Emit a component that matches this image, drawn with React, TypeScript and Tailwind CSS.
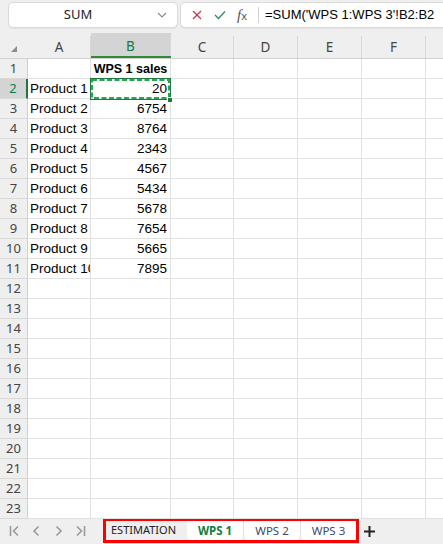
import React from "react";

const cols = [
  { key: "A", w: "w-[63px]" },
  { key: "B", w: "w-[80px]" },
  { key: "C", w: "w-[63px]" },
  { key: "D", w: "w-[64px]" },
  { key: "E", w: "w-[64px]" },
  { key: "F", w: "w-[64px]" },
];

const data: Record<number, [string, string, boolean?]> = {
  1: ["", "WPS 1 sales", true],
  2: ["Product 1", "20"],
  3: ["Product 2", "6754"],
  4: ["Product 3", "8764"],
  5: ["Product 4", "2343"],
  6: ["Product 5", "4567"],
  7: ["Product 6", "5434"],
  8: ["Product 7", "5678"],
  9: ["Product 8", "7654"],
  10: ["Product 9", "5665"],
  11: ["Product 10", "7895"],
};

const ui = { fontFamily: '"Noto Sans", "Open Sans", sans-serif' };
const cellFont = { fontFamily: '"Liberation Sans", Arial, sans-serif' };

function Selection() {
  return (
    <svg className="absolute left-[-1px] top-[-1px] pointer-events-none" width="83" height="24" viewBox="0 0 83 24">
      <rect x="0.5" y="0.5" width="80" height="21" fill="none" stroke="#1f7a3f" strokeWidth="1" />
      <rect x="2" y="2" width="77" height="18" fill="none" stroke="#26a84f" strokeWidth="2" strokeDasharray="5 2.5" />
      <rect x="77.5" y="19.5" width="5" height="5" fill="#1f7a3f" stroke="#ffffff" strokeWidth="1" />
    </svg>
  );
}

function Row({ n }: { n: number }) {
  const d = data[n];
  const selected = n === 2;
  return (
    <div className="flex h-[20px]">
      <div
        className={`w-[28px] shrink-0 flex items-center justify-center pt-[1px] border-b border-[#d9d9d9] text-[13px] ${
          selected ? "bg-[#d4d4d4] text-[#107c41] border-r-2 border-r-[#217346]" : "bg-[#efefef] text-[#444] border-r border-r-[#d0d0d0]"
        }`}
        style={ui}
      >
        {n}
      </div>
      {cols.map((c) => {
        let content: React.ReactNode = null;
        let align = "justify-start pl-[2px]";
        let bold = false;
        if (d && c.key === "A") content = d[0];
        if (d && c.key === "B") {
          content = d[1];
          if (d[2]) {
            bold = true;
            align = "justify-center";
          } else align = "justify-end pr-[3px]";
        }
        return (
          <div
            key={c.key}
            className={`${c.w} shrink-0 relative flex items-center pt-[1px] overflow-hidden whitespace-nowrap bg-white border-r border-b border-[#e1e1e1] text-black ${align} ${
              bold ? "font-bold text-[12.5px]" : "text-[13.5px]"
            }`}
            style={cellFont}
          >
            {content}
          </div>
        );
      })}
      <div className="flex-1 bg-white border-b border-[#e1e1e1]" />
    </div>
  );
}

function NavIcon({ kind }: { kind: "first" | "prev" | "next" | "last" }) {
  return (
    <svg width="11" height="12" viewBox="0 0 11 12" fill="none" stroke="#9a9a9a" strokeWidth="1.6">
      {kind === "first" && (
        <>
          <line x1="1.5" y1="1" x2="1.5" y2="11" />
          <polyline points="9,1.5 4.5,6 9,10.5" />
        </>
      )}
      {kind === "prev" && <polyline points="7.5,1.5 3,6 7.5,10.5" />}
      {kind === "next" && <polyline points="3.5,1.5 8,6 3.5,10.5" />}
      {kind === "last" && (
        <>
          <polyline points="2,1.5 6.5,6 2,10.5" />
          <line x1="9.5" y1="1" x2="9.5" y2="11" />
        </>
      )}
    </svg>
  );
}

export default function App() {
  const rows = Array.from({ length: 23 }, (_, i) => i + 1);
  return (
    <div className="w-[443px] h-[544px] bg-[#efefef] flex flex-col overflow-hidden">
      {/* top bar */}
      <div className="h-[33px] shrink-0 flex pt-[2px] pl-[8px] gap-[2px]">
        <div className="w-[170px] shrink-0 h-[26px] bg-white rounded-[5px] border border-[#dadada] shadow-[0_1px_1px_rgba(0,0,0,0.06)] flex items-center">
          <div className="flex-1 text-center text-[13px] text-[#222]" style={ui}>
            SUM
          </div>
          <div className="w-[30px] flex items-center justify-center">
            <svg width="10" height="6" viewBox="0 0 10 6" fill="none" stroke="#8a8a8a" strokeWidth="1.1">
              <polyline points="1,1 5,5 9,1" />
            </svg>
          </div>
        </div>
        <div className="w-[290px] shrink-0 h-[26px] bg-white rounded-[5px] border border-[#dadada] shadow-[0_1px_1px_rgba(0,0,0,0.06)] flex items-center">
          <div className="w-[11px]" />
          <svg width="10" height="10" viewBox="0 0 10 10" stroke="#c8374b" strokeWidth="1.3">
            <line x1="1" y1="1" x2="9" y2="9" />
            <line x1="9" y1="1" x2="1" y2="9" />
          </svg>
          <div className="w-[12px]" />
          <svg width="12" height="10" viewBox="0 0 12 10" fill="none" stroke="#2e8b57" strokeWidth="1.3">
            <polyline points="1,5 4.5,8.5 11,1.5" />
          </svg>
          <div className="w-[11px]" />
          <span className="text-[15px] italic text-[#555] leading-none" style={{ fontFamily: '"Liberation Serif", serif' }}>
            f<span className="text-[11px] not-italic" style={ui}>x</span>
          </span>
          <div className="w-[11px]" />
          <div className="w-px h-[16px] bg-[#d0d0d0]" />
          <div className="w-[6px]" />
          <span className="text-[13px] text-black whitespace-nowrap" style={cellFont}>
            =SUM('WPS 1:WPS 3'!B2:B2
          </span>
        </div>
      </div>

      {/* column headers */}
      <div className="h-[26px] shrink-0 flex border-b border-[#d0d0d0]">
        <div className="w-[28px] shrink-0 flex items-end justify-end pb-[6px] pr-[11px]">
          <svg width="6" height="6" viewBox="0 0 6 6">
            <polygon points="6,0 6,6 0,6" fill="#8c8c8c" />
          </svg>
        </div>
        {cols.map((c) => {
          const sel = c.key === "B";
          return (
            <div key={c.key} className={`${c.w} shrink-0 flex flex-col ${sel ? "bg-[#d4d4d4]" : ""}`}>
              <div
                className={`flex-1 flex items-center justify-center text-[13.5px] mt-[3px] ${
                  sel ? "text-[#107c41]" : "text-[#444]"
                } border-r border-[#d8d8d8]`}
                style={ui}
              >
                {c.key}
              </div>
              {sel && <div className="h-[2px] bg-[#2f8a3a]" />}
            </div>
          );
        })}
        <div className="flex-1" />
      </div>

      {/* grid */}
      <div className="relative shrink-0">
        {rows.map((n) => (
          <Row key={n} n={n} />
        ))}
        <div className="absolute left-[91px] top-[20px]">
          <Selection />
        </div>
      </div>

      {/* tab bar */}
      <div className="h-[25px] shrink-0 flex items-start">
        <div className="w-[103px] h-[24px] shrink-0 flex items-center pl-[9px] gap-[11px]">
          <NavIcon kind="first" />
          <NavIcon kind="prev" />
          <NavIcon kind="next" />
          <NavIcon kind="last" />
        </div>
        <div className="h-[24px] shrink-0 flex border-[3px] border-[#ff0000] border-t-[2px]">
          <div className="w-[81px] flex items-center pl-[5px] text-[11px] text-[#222]" style={ui}>
            ESTIMATION
          </div>
          <div className="w-[57px] bg-white rounded-b-[4px] flex items-center justify-center text-[11.5px] font-bold text-[#107c41] border-r border-[#e0e0e0]" style={ui}>
            WPS 1
          </div>
          <div className="w-[57px] bg-white rounded-b-[4px] flex items-center justify-center text-[11.5px] text-[#3b4a6b] border-r border-[#e0e0e0]" style={ui}>
            WPS 2
          </div>
          <div className="w-[55px] bg-white rounded-b-[4px] flex items-center justify-center text-[11.5px] text-[#3b4a6b]" style={ui}>
            WPS 3
          </div>
        </div>
        <div className="h-[24px] flex items-center pl-[5px]">
          <svg width="11" height="11" viewBox="0 0 11 11" stroke="#222" strokeWidth="2">
            <line x1="5.5" y1="0" x2="5.5" y2="11" />
            <line x1="0" y1="5.5" x2="11" y2="5.5" />
          </svg>
        </div>
      </div>
    </div>
  );
}
